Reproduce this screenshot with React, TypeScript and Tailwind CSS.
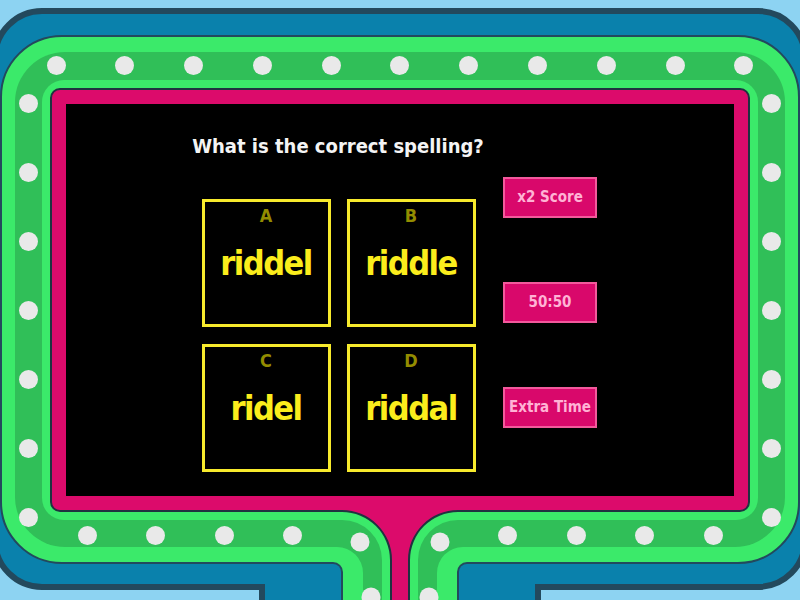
import React from "react";

const Dot = () => <div className="w-[19px] h-[19px] rounded-full bg-[#e9e9e9] shrink-0" />;

const font = "font-['Liberation_Sans_Narrow','DejaVu_Sans_Condensed','Roboto',sans-serif]";

function Dots({ n }: { n: number }) {
  return (
    <>
      {Array.from({ length: n }).map((_, i) => (
        <Dot key={i} />
      ))}
    </>
  );
}

function Answer({ letter, word }: { letter: string; word: string }) {
  return (
    <div className="w-[129px] h-[128px] border-[3px] border-[#f7ea2c] flex flex-col items-center">
      <div className="mt-[4px] text-[18px] leading-[20px] font-bold text-[#938c00]">{letter}</div>
      <div className="mt-[17px] text-[34px] leading-[40px] font-bold tracking-[-1.5px] text-[#fbed1c]">{word}</div>
    </div>
  );
}

function PowerUp({ label }: { label: string }) {
  return (
    <div className="w-[94px] h-[41px] bg-[#d9086b] border-2 border-[#f2599c] flex items-center justify-center text-[15px] font-bold text-[#ffb3d5]">
      {label}
    </div>
  );
}

/* decorative stand where the frame meets the podium */
function Stand() {
  const dark = "#23495d";
  const line = "#1f3340";
  const blue = "#0a81ac";
  const bright = "#3bea6a";
  const mid = "#30bf58";
  const pink = "#dc0b6b";
  return (
    <svg
      className="absolute left-[259px] top-[497px]"
      width="282"
      height="103"
      viewBox="259 497 282 103"
    >
      {/* blue neck */}
      <rect x="259" y="584" width="282" height="20" fill={dark} />
      <rect x="265" y="584" width="270" height="20" fill={blue} />
      {/* outer bright column */}
      <rect x="341" y="562" width="118" height="40" fill={dark} />
      <rect x="343" y="562" width="114" height="40" fill={bright} />
      {/* blue corner fillets */}
      <rect x="333" y="562" width="10" height="10" fill={bright} />
      <path d="M333 572 L333 562 A10 10 0 0 1 343 572 Z" fill={dark} />
      <path d="M333 572 L333 564 A8 8 0 0 1 341 572 Z" fill={blue} />
      <rect x="457" y="562" width="10" height="10" fill={bright} />
      <path d="M467 572 L467 562 A10 10 0 0 0 457 572 Z" fill={dark} />
      <path d="M467 572 L467 564 A8 8 0 0 0 459 572 Z" fill={blue} />
      {/* medium band turning down */}
      <rect x="363" y="540" width="74" height="62" fill={mid} />
      <path d="M337 547 L363 547 L363 573 A26 26 0 0 0 337 547 Z" fill={mid} />
      <path d="M463 547 L437 547 L437 573 A26 26 0 0 1 463 547 Z" fill={mid} />
      {/* inner bright band */}
      <rect x="382" y="512" width="36" height="90" fill={bright} />
      <path d="M342 520 L382 520 L382 560 A40 40 0 0 0 342 520 Z" fill={bright} />
      <path d="M458 520 L418 520 L418 560 A40 40 0 0 1 458 520 Z" fill={bright} />
      {/* pink podium */}
      <rect x="390" y="510" width="20" height="92" fill={line} />
      <path d="M342 510 H392 V560 H390 A48 48 0 0 0 342 512 Z" fill={line} />
      <path d="M458 510 H408 V560 H410 A48 48 0 0 1 458 512 Z" fill={line} />
      <rect x="392" y="510" width="16" height="92" fill={pink} />
      <path d="M342 510 H392 V560 A50 50 0 0 0 342 510 Z" fill={pink} />
      <path d="M458 510 H408 V560 A50 50 0 0 1 458 510 Z" fill={pink} />
      {/* lights */}
      <circle cx="360" cy="542" r="9.5" fill="#e9e9e9" />
      <circle cx="440" cy="542" r="9.5" fill="#e9e9e9" />
      <circle cx="371" cy="597" r="9.5" fill="#e9e9e9" />
      <circle cx="429" cy="597" r="9.5" fill="#e9e9e9" />
    </svg>
  );
}

export default function App() {
  return (
    <div className={`relative w-[800px] h-[600px] overflow-hidden bg-[#8dd3f2] pt-[8px] ${font}`}>
      {/* blue outer frame */}
      <div className="mx-[-8px] h-[582px] rounded-[50px] border-[6px] border-[#23495d] bg-[#0a81ac] pt-[21px] px-[2px]">
        {/* green frame */}
        <div className="h-[529px] rounded-[62px] border-2 border-[#23495d] bg-[#3bea6a] pt-[15px] pb-[15px] px-[13px]">
          <div className="h-full rounded-[50px] bg-[#30bf58] flex flex-col">
            {/* top lights */}
            <div className="h-[28px] shrink-0 flex items-start justify-between pt-[3.5px] px-[31.5px]">
              <Dots n={11} />
            </div>
            <div className="flex-1 flex min-h-0">
              <div className="w-[27px] shrink-0 flex flex-col items-center justify-between pt-[13.5px] mb-[-6.5px]">
                <Dots n={7} />
              </div>
              {/* inner ring */}
              <div className="flex-1 rounded-[22px] bg-[#3bea6a] p-[8px]">
                <div className="h-full rounded-[10px] border-2 border-[#1f3340] bg-[#dc0b6b] p-[14px]">
                  {/* screen */}
                  <div className="h-full bg-black flex pt-[30px] pl-[127px]">
                    <div className="flex gap-[20px]">
                      <div className="flex flex-col items-center w-[290px]">
                        <div className="h-[24px] leading-[24px] text-[20px] font-bold text-[#f4f4f4] whitespace-nowrap">
                          What is the correct spelling?
                        </div>
                        <div className="mt-[41px] grid grid-cols-[129px_128px] gap-x-[16px] gap-y-[17px]">
                          <Answer letter="A" word="riddel" />
                          <Answer letter="B" word="riddle" />
                          <Answer letter="C" word="ridel" />
                          <Answer letter="D" word="riddal" />
                        </div>
                      </div>
                      <div className="flex flex-col mt-[43px] gap-[64px]">
                        <PowerUp label="x2 Score" />
                        <PowerUp label="50:50" />
                        <PowerUp label="Extra Time" />
                      </div>
                    </div>
                  </div>
                </div>
              </div>
              <div className="w-[27px] shrink-0 flex flex-col items-center justify-between pt-[13.5px] mb-[-6.5px]">
                <Dots n={7} />
              </div>
            </div>
            {/* bottom lights */}
            <div className="h-[27px] shrink-0 flex items-start justify-between pt-[5.5px] px-[62.5px]">
              <div className="flex gap-[49.5px]">
                <Dots n={4} />
              </div>
              <div className="flex gap-[49.5px]">
                <Dots n={4} />
              </div>
            </div>
          </div>
        </div>
      </div>
      <Stand />
    </div>
  );
}
